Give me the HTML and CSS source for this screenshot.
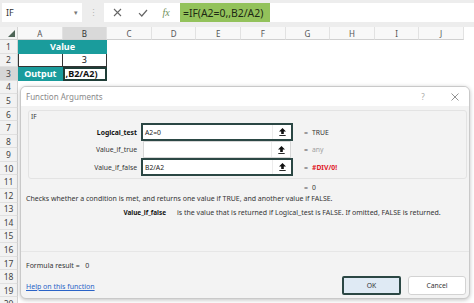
FILE: index.html
```html
<!DOCTYPE html>
<html>
<head>
  <title>Function Arguments</title>
  <link rel="stylesheet" href="styles.css">
</head>
<body>
  <div class="app">
    <div class="toolbar">
      <div class="namebox"><span>IF</span><span class="caret">&#9662;</span></div>
      <div class="dots">&#8942;</div>
      <div class="formula">
        <span class="fbtn fb-x">
          <svg width="9" height="9" viewBox="0 0 9 9"><path d="M1 1 L8 8 M8 1 L1 8" stroke="#666" stroke-width="1.1" fill="none"/></svg>
        </span>
        <span class="fbtn fb-ok">
          <svg width="10" height="8" viewBox="0 0 10 8"><path d="M1 4.2 L3.8 7 L9 1" stroke="#666" stroke-width="1.2" fill="none"/></svg>
        </span>
        <span class="fbtn fb-fx">fx</span>
        <div class="fcontent">=IF(A2=0,,B2/A2)</div>
      </div>
    </div>

    <div class="sheet">
      <div class="corner"><span class="corner-mark"></span></div>
      <div class="colhead">A</div>
      <div class="colhead active">B</div>
      <div class="colhead">C</div>
      <div class="colhead">D</div>
      <div class="colhead">E</div>
      <div class="colhead">F</div>
      <div class="colhead">G</div>
      <div class="colhead">H</div>
      <div class="colhead">I</div>
      <div class="colhead">J</div>

      <div class="rowhead">1</div>
      <div class="cell teal span2">Value</div>
      <div class="fill"></div>

      <div class="rowhead">2</div>
      <div class="cell boxed first"></div>
      <div class="cell boxed num">3</div>
      <div class="fill"></div>

      <div class="rowhead active">3</div>
      <div class="cell teal">Output</div>
      <div class="cell selected">,B2/A2)</div>
      <div class="fill"></div>

      <div class="rowhead">4</div><div class="fill"></div>
      <div class="rowhead">5</div><div class="fill"></div>
      <div class="rowhead">6</div><div class="fill"></div>
      <div class="rowhead">7</div><div class="fill"></div>
      <div class="rowhead">8</div><div class="fill"></div>
      <div class="rowhead">9</div><div class="fill"></div>
      <div class="rowhead">10</div><div class="fill"></div>
      <div class="rowhead">11</div><div class="fill"></div>
      <div class="rowhead">12</div><div class="fill"></div>
      <div class="rowhead">13</div><div class="fill"></div>
      <div class="rowhead">14</div><div class="fill"></div>
      <div class="rowhead">15</div><div class="fill"></div>
      <div class="rowhead">16</div><div class="fill"></div>
      <div class="rowhead">17</div><div class="fill"></div>
      <div class="rowhead">18</div><div class="fill"></div>
      <div class="rowhead">19</div><div class="fill"></div>
      <div class="rowhead">20</div><div class="fill"></div>
    </div>

    <div class="dialog">
      <div class="dlg-title">
        <span class="dlg-name">Function Arguments</span>
        <span class="dlg-help">?</span>
        <span class="dlg-close">
          <svg width="8" height="8" viewBox="0 0 8 8"><path d="M0.5 0.5 L7.5 7.5 M7.5 0.5 L0.5 7.5" stroke="#888" stroke-width="0.9" fill="none"/></svg>
        </span>
      </div>

      <div class="dlg-body">
        <div class="args-group">
          <div class="fn-name">IF</div>

          <div class="arg-row">
            <div class="arg-label strong">Logical_test</div>
            <div class="arg-input focus">
              <span class="arg-text">A2=0</span>
              <span class="arg-pick"><svg width="7" height="8" viewBox="0 0 7 8"><path d="M3.5 0 L7 3.6 L4.8 3.6 L4.8 6 L2.2 6 L2.2 3.6 L0 3.6 Z" fill="#111"/><path d="M0.3 7.5 H6.7" stroke="#111" stroke-width="0.9"/></svg></span>
            </div>
            <span class="arg-eq">=</span>
            <span class="arg-val">TRUE</span>
          </div>

          <div class="arg-row">
            <div class="arg-label">Value_if_true</div>
            <div class="arg-input plain">
              <span class="arg-text"></span>
              <span class="arg-pick"><svg width="7" height="8" viewBox="0 0 7 8"><path d="M3.5 0 L7 3.6 L4.8 3.6 L4.8 6 L2.2 6 L2.2 3.6 L0 3.6 Z" fill="#111"/><path d="M0.3 7.5 H6.7" stroke="#111" stroke-width="0.9"/></svg></span>
            </div>
            <span class="arg-eq">=</span>
            <span class="arg-val muted">any</span>
          </div>

          <div class="arg-row">
            <div class="arg-label">Value_if_false</div>
            <div class="arg-input focus">
              <span class="arg-text">B2/A2</span>
              <span class="arg-pick"><svg width="7" height="8" viewBox="0 0 7 8"><path d="M3.5 0 L7 3.6 L4.8 3.6 L4.8 6 L2.2 6 L2.2 3.6 L0 3.6 Z" fill="#111"/><path d="M0.3 7.5 H6.7" stroke="#111" stroke-width="0.9"/></svg></span>
            </div>
            <span class="arg-eq">=</span>
            <span class="arg-val error">#DIV/0!</span>
          </div>
        </div>

        <div class="total"><span class="arg-eq">=</span><span class="arg-val">0</span></div>
        <div class="desc">Checks whether a condition is met, and returns one value if TRUE, and another value if FALSE.</div>
        <div class="arg-desc">
          <span class="arg-desc-name">Value_if_false</span>
          <span>is the value that is returned if Logical_test is FALSE. If omitted, FALSE is returned.</span>
        </div>
      </div>

      <div class="dlg-foot">
        <div class="foot-left">
          <div class="result">Formula result =&nbsp;&nbsp;&nbsp;0</div>
          <a class="help" href="#">Help on this function</a>
        </div>
        <div class="buttons">
          <button class="btn primary">OK</button>
          <button class="btn">Cancel</button>
        </div>
      </div>
    </div>
  </div>
</body>
</html>
```

FILE: styles.css
```css
body {
  margin: 0;
  font-family: "Noto Sans", "Open Sans", sans-serif;
}

.app {
  position: relative;
  width: 474px;
  height: 303px;
  overflow: hidden;
  background: #fff;
}

/* formula bar */
.toolbar {
  display: flex;
  align-items: center;
  height: 27px;
  padding: 3px 0 5px 2px;
  box-sizing: border-box;
  background: #ededed;
}
.namebox {
  width: 80px;
  height: 100%;
  box-sizing: border-box;
  padding: 0 4px;
  display: flex;
  align-items: center;
  justify-content: space-between;
  background: #fff;
  font-size: 9px;
  color: #333;
}
.caret {
  font-size: 7px;
  color: #777;
}
.dots {
  width: 22px;
  text-align: center;
  font-size: 9px;
  color: #b5b5b5;
}
.formula {
  flex: 1;
  height: 100%;
  display: flex;
  align-items: center;
  background: #fff;
}
.fbtn {
  display: flex;
  align-items: center;
  justify-content: center;
  height: 100%;
}
.fb-x { width: 26px; }
.fb-ok { width: 25px; }
.fb-fx {
  width: 22px;
  font-family: "Liberation Serif", serif;
  font-style: italic;
  font-size: 10px;
  color: #6f8f5a;
}
.fcontent {
  width: 90px;
  height: 100%;
  margin-left: 3px;
  box-sizing: border-box;
  padding-left: 3px;
  display: flex;
  align-items: center;
  background: #93c25b;
  font-size: 10.4px;
  color: #1e2a14;
}

/* sheet */
.sheet {
  display: grid;
  grid-template-columns: 18px repeat(10, 44.6px);
  grid-template-rows: 13px repeat(20, 13.55px);
}
.corner {
  position: relative;
  background: #f3f3f3;
  border-right: 1px solid #d4d4d4;
  border-bottom: 1px solid #cfcfcf;
}
.corner-mark {
  position: absolute;
  right: 2px;
  bottom: 2px;
  width: 0;
  height: 0;
  border-left: 7px solid transparent;
  border-bottom: 7px solid #4d6456;
}
.colhead {
  display: flex;
  align-items: center;
  justify-content: center;
  background: #f8f8f8;
  border-right: 1px solid #e2e2e2;
  border-bottom: 1px solid #d0d0d0;
  font-size: 8px;
  color: #555;
}
.colhead.active {
  background: #d9d9d9;
  color: #333;
}
.rowhead {
  display: flex;
  align-items: center;
  justify-content: center;
  background: #f2f2f2;
  border-right: 1px solid #d2d2d2;
  border-bottom: 1px solid #e0e0e0;
  font-size: 8.5px;
  color: #444;
}
.rowhead.active {
  background: #d6d6d6;
}
.fill {
  grid-column: span 10;
}
.cell {
  display: flex;
  align-items: center;
  box-sizing: border-box;
  font-size: 9px;
  color: #111;
}
.cell.teal {
  justify-content: center;
  background: #1a9c9c;
  color: #fff;
  font-weight: 700;
}
.span2 {
  grid-column: span 2;
}
.span2 + .fill,
.num + .fill,
.selected + .fill {
  grid-column: span 8;
}
.cell.boxed {
  border-right: 1px solid #333;
  border-bottom: 1px solid #333;
}
.cell.boxed.first {
  border-left: 1px solid #333;
}
.cell.num {
  justify-content: center;
}
.cell.selected {
  border: 2px solid #1f3d37;
  padding-left: 1px;
  font-weight: 700;
}

/* dialog */
.dialog {
  position: absolute;
  left: 20px;
  top: 86px;
  width: 450px;
  height: 213px;
  box-sizing: border-box;
  display: flex;
  flex-direction: column;
  border: 1px solid #c9c9c9;
  border-radius: 6px;
  overflow: hidden;
  background: #f3f3f3;
  box-shadow: 0 1px 4px rgba(0, 0, 0, 0.25);
  font-size: 7px;
  color: #333;
}
.dlg-title {
  display: flex;
  align-items: center;
  height: 19px;
  padding-left: 5px;
  background: #fff;
}
.dlg-name {
  flex: 1;
  font-size: 8px;
  color: #8a8a8a;
}
.dlg-help {
  width: 10px;
  margin-right: 23px;
  text-align: center;
  font-size: 8px;
  color: #aaa;
}
.dlg-close {
  display: flex;
  width: 8px;
  margin-right: 10px;
}
.dlg-body {
  padding: 4px 2px 0 5px;
}
.args-group {
  height: 69px;
  box-sizing: border-box;
  margin-left: 2px;
  padding: 2px 0 0 1px;
  border: 1px solid #e3e3e3;
  border-radius: 3px;
}
.fn-name {
  height: 8px;
  line-height: 8px;
  padding-left: 1px;
  font-size: 6.5px;
}
.arg-row {
  display: flex;
  align-items: center;
  height: 17px;
}
.fn-name + .arg-row {
  margin-top: 2px;
  height: 18px;
}
.arg-row:last-child {
  height: 18px;
}
.arg-label {
  width: 111px;
  padding-right: 4px;
  box-sizing: border-box;
  text-align: right;
  font-size: 6.8px;
  color: #333;
}
.arg-label.strong {
  font-weight: 700;
  color: #111;
}
.arg-input {
  width: 152px;
  height: 100%;
  box-sizing: border-box;
  display: flex;
  align-items: center;
  border: 1px solid #d6d6d6;
  background: #fff;
}
.arg-input.plain {
  width: 148px;
  margin: 0 2px;
}
.arg-input.focus {
  border: 2px solid #2b4744;
}
.arg-text {
  flex: 1;
  padding-left: 2px;
  font-size: 6.8px;
  color: #222;
}
.arg-pick {
  display: flex;
  align-items: center;
  justify-content: center;
  width: 18px;
  height: 100%;
  border-left: 1px solid #ececec;
}
.arg-eq {
  width: 8px;
  margin-left: 11px;
  color: #555;
}
.arg-val {
  font-size: 6.8px;
  color: #333;
}
.arg-val.muted {
  color: #a0a0a0;
}
.arg-val.error {
  font-weight: 700;
  color: #e0202a;
}
.total {
  display: flex;
  height: 12px;
  align-items: center;
  margin-top: 2px;
  padding-left: 267px;
}
.desc {
  height: 12px;
  line-height: 12px;
}
.arg-desc {
  display: flex;
  height: 12px;
  line-height: 12px;
  margin-top: 2px;
}
.arg-desc-name {
  width: 151px;
  padding-right: 11px;
  box-sizing: border-box;
  text-align: right;
  font-size: 6.4px;
  font-weight: 700;
  color: #111;
}
.dlg-foot {
  flex: 1;
  display: flex;
  justify-content: space-between;
  margin-top: 32px;
  padding: 8px 3px 3px 5px;
  border-top: 1px solid #e6e6e6;
}
.foot-left {
  display: flex;
  flex-direction: column;
  gap: 9px;
}
.result {
  height: 12px;
  line-height: 12px;
}
.help {
  height: 12px;
  line-height: 12px;
  color: #2a63c7;
}
.buttons {
  align-self: flex-end;
  display: flex;
  gap: 7px;
}
.btn {
  width: 58px;
  height: 19px;
  padding: 0;
  border: 1px solid #d3d3d3;
  border-radius: 3px;
  background: #fff;
  font-family: inherit;
  font-size: 6.8px;
  color: #333;
}
.btn.primary {
  width: 59px;
  border: 2px solid #2b4744;
  border-radius: 2px;
  background: #dfeaf4;
}
```
